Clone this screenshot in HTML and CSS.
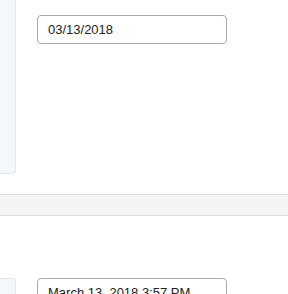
FILE: index.html
```html
<!doctype html>
<html lang="en">
<head>
    <meta charset="utf-8">
    <title>Date fields</title>
    <link rel="stylesheet" href="styles.css">
</head>
<body>
    <div class="row first">
        <div class="side"></div>
        <div class="field">
            <input type="text" class="date-input" value="03/13/2018">
        </div>
    </div>

    <div class="band"></div>

    <div class="row second">
        <div class="side"></div>
        <div class="field">
            <input type="text" class="date-input" value="March 13, 2018 3:57 PM">
        </div>
    </div>
</body>
</html>
```

FILE: styles.css
```css
body{
    margin: 0;
    font-family: "Liberation Sans", Arial, sans-serif;
    font-size: 13px;
    color: #222;
    background: #fff;
    overflow: hidden;
}
.row{
    display: flex;
    gap: 21px;
}
.first{
    height: 174px;
}
.second{
    margin-top: 62px;
    height: 120px;
}
.side{
    width: 15px;
    background: #f4f7fc;
    border: 1px solid #dfe5ee;
    border-left: none;
}
.first .side{
    border-top: none;
    border-bottom-right-radius: 4px;
}
.second .side{
    border-bottom: none;
    border-top-right-radius: 4px;
}
.first .field{
    padding-top: 15px;
}
.date-input{
    box-sizing: border-box;
    width: 190px;
    height: 29px;
    margin: 0;
    padding: 0 10px;
    border: 1px solid #a9a9a9;
    border-radius: 4px;
    font-family: "Liberation Sans", Arial, sans-serif;
    font-size: 13px;
    color: #222;
    background: #fff;
    outline: none;
}
.band{
    margin-top: 20px;
    height: 20px;
    background: #f4f4f4;
    border-top: 1px solid #dcdcdc;
    border-bottom: 1px solid #dcdcdc;
}
```
